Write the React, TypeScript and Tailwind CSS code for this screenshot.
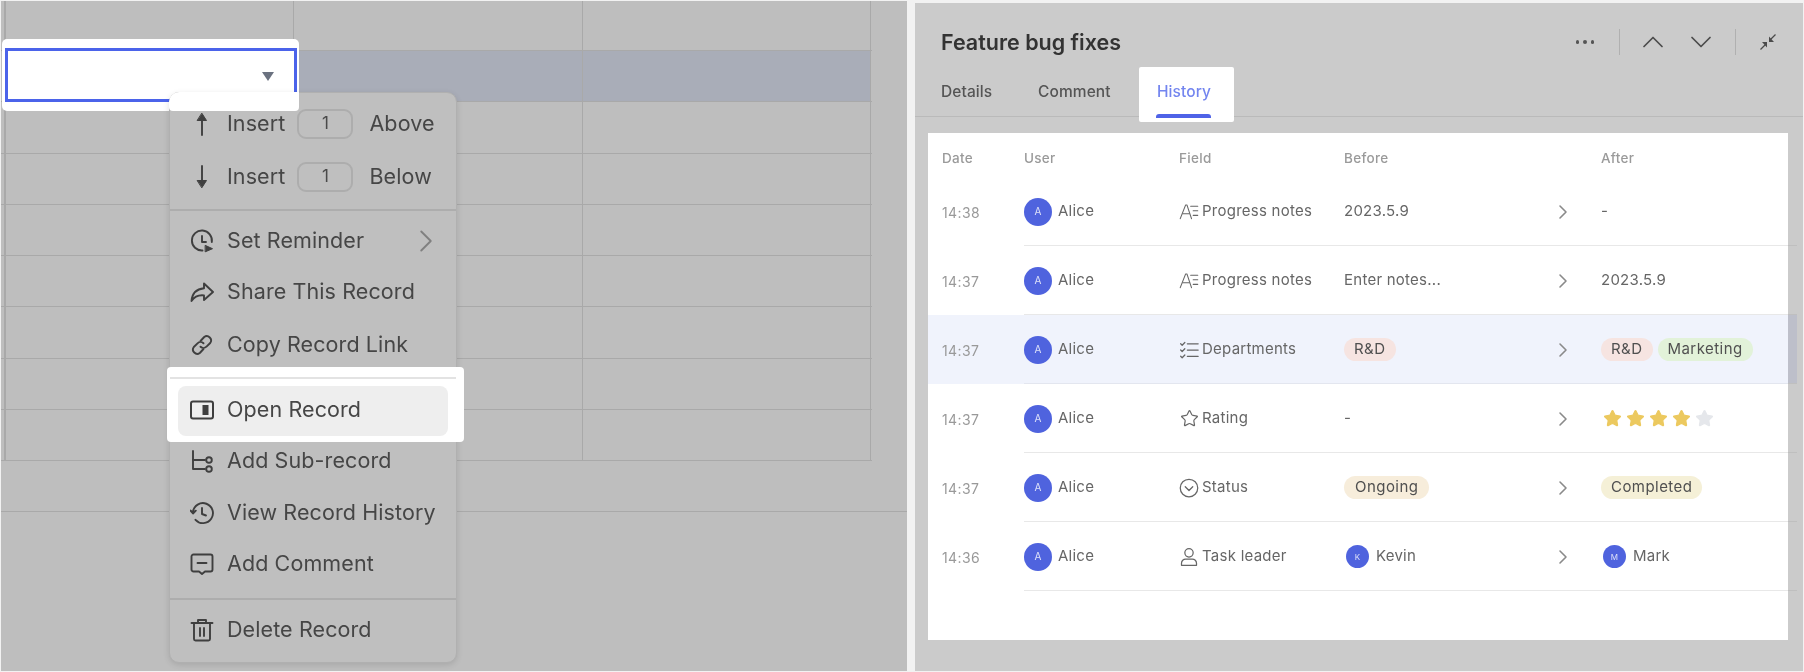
// App.tsx
import type { ReactNode } from "react";
import { ChevronDown, ChevronRight, ChevronUp, Star } from "lucide-react";

const ROWS = [0, 1, 2, 3, 4, 5, 6, 7, 8];

function IconBox({ children, size = 24 }: { children: ReactNode; size?: number }) {
  return (
    <svg width={size} height={size} viewBox="0 0 24 24" fill="none" stroke="currentColor" strokeWidth="1.9" strokeLinecap="round" strokeLinejoin="round" className="shrink-0">
      {children}
    </svg>
  );
}

const ArrowUpIcon = () => (
  <IconBox>
    <path d="M12 8v15" />
    <path d="M12 1.500l4.500 7h-9z" fill="currentColor" strokeWidth="1" />
  </IconBox>
);
const ArrowDownIcon = () => (
  <IconBox>
    <path d="M12 1v15" />
    <path d="M12 22.500l4.500-7h-9z" fill="currentColor" strokeWidth="1" />
  </IconBox>
);
const ReminderIcon = () => (
  <IconBox>
    <path d="M12.500 21.500A10 10 0 1 1 21.800 13" />
    <path d="M12 7v6h4" />
    <path d="M15.500 16.500l7 3.200-7 3z" fill="currentColor" strokeWidth="1" />
  </IconBox>
);
const ShareIcon = () => (
  <IconBox>
    <path d="M14 3.500l9 8.500-9 8v-4.600c-5.500-.6-9.500 1-12.500 5.600.5-7 4.500-12 12.500-12.800z" />
  </IconBox>
);
const LinkIcon = () => (
  <IconBox>
    <path d="M10.500 8l3.700-4a4.300 4.300 0 0 1 6 6l-3.700 3.700a4.300 4.300 0 0 1-6 0" />
    <path d="M13.500 16l-3.700 4a4.300 4.300 0 0 1-6-6l3.700-3.700a4.300 4.300 0 0 1 6 0" />
  </IconBox>
);
const OpenIcon = () => (
  <IconBox>
    <rect x="1" y="3.500" width="22" height="17" rx="2" strokeWidth="2" />
    <rect x="12.500" y="7" width="6" height="10" fill="currentColor" stroke="none" />
  </IconBox>
);
const SubRecordIcon = () => (
  <IconBox>
    <path d="M3 2v18h12" />
    <path d="M3 11h12" />
    <circle cx="19" cy="11" r="2.800" />
    <circle cx="19" cy="20" r="2.800" />
  </IconBox>
);
const HistoryIcon = () => (
  <IconBox>
    <path d="M3 11a10 10 0 1 1 2.500 7.800" />
    <path d="M.5 9.500l2.500 3 2.800-2.800" fill="currentColor" />
    <path d="M12 7v6l4 1.500" />
  </IconBox>
);
const CommentIcon = () => (
  <IconBox>
    <path d="M3.500 2.500h17a2 2 0 0 1 2 2v13a2 2 0 0 1-2 2H15l-3 2.500-3-2.500H3.500a2 2 0 0 1-2-2v-13a2 2 0 0 1 2-2z" />
    <path d="M7.500 11h9" />
  </IconBox>
);
const TrashIcon = () => (
  <IconBox>
    <path d="M1.500 5h21" />
    <path d="M8 5V2h8v3" />
    <path d="M4 5v16a1.500 1.500 0 0 0 1.500 1.500h13A1.500 1.500 0 0 0 20 21V5" />
    <path d="M10 10v8M14 10v8" />
  </IconBox>
);

const NotesIcon = () => (
  <IconBox size={20}>
    <g strokeWidth="1.300">
      <path d="M1.500 20L8 3.500h1.500L15 20" />
      <path d="M4.500 14h8" />
      <path d="M14 5h8.500M17 10.500h5.500M17 16h5.500" />
    </g>
  </IconBox>
);
const DepartmentsIcon = () => (
  <IconBox size={20}>
    <g strokeWidth="1.500">
      <path d="M10 4.500h13M10 12h13M10 19.500h13" />
      <path d="M2 4.500l1.800 1.800L7 3M2 12l1.800 1.800L7 10.500M2 19.500l1.800 1.800L7 18" />
    </g>
  </IconBox>
);
const StatusIcon = () => (
  <IconBox size={20}>
    <g strokeWidth="1.500">
      <circle cx="12" cy="12" r="10.500" />
      <path d="M7.500 10.500l4.500 4.500 4.500-4.500" />
    </g>
  </IconBox>
);
const UserIcon = () => (
  <IconBox size={20}>
    <g strokeWidth="1.500">
      <circle cx="12" cy="7" r="5" />
      <path d="M3 22v-2.500a5 5 0 0 1 5-5h8a5 5 0 0 1 5 5V22z" />
    </g>
  </IconBox>
);
const RatingIcon = () => (
  <span className="flex w-[20px] shrink-0 justify-center">
    <Star size={19} strokeWidth={1.500} />
  </span>
);

const CollapseIcon = () => (
  <svg width="16" height="16" viewBox="0 0 16 16" fill="none" stroke="currentColor" strokeWidth="1.300" className="mx-[4px]">
    <path d="M15.500.5L10 6M.5 15.500L6 10" />
    <path d="M9 8V2.500L14 8zM7 8v5.500L2 8z" fill="currentColor" stroke="none" />
  </svg>
);

function MenuRow({ icon, children, className = "" }: { icon: ReactNode; children: ReactNode; className?: string }) {
  return (
    <div className={`flex items-center text-[21.500px] tracking-[0.1px] text-[#464646] ${className}`}>
      <span className="flex w-[57px] shrink-0 justify-center pl-[7px] text-[#3f3f3f]">{icon}</span>
      {children}
    </div>
  );
}

function CountBox() {
  return (
    <span className="ml-[12px] mr-[16px] flex h-[30px] w-[56px] items-center justify-center rounded-[9px] border-2 border-[#adadad] text-[17px] text-[#4a4a4a]">1</span>
  );
}

function Sheet() {
  return (
    <div className="flex flex-col">
      {ROWS.map((r) => (
        <div key={r} className={`grid w-[871px] grid-cols-[5px_288px_289px_288px] border-b border-[#a9a9a9] ${r === 0 ? "h-[50px]" : "h-[51.250px]"}`}>
          <div className="border-r-2 border-[#a9a9a9]" />
          <div className="border-r border-[#a9a9a9]" />
          <div className={`border-r border-[#a9a9a9] ${r === 1 ? "bg-[#a9adb8]" : ""}`} />
          <div className={`border-r border-[#a9a9a9] ${r === 1 ? "bg-[#a9adb8]" : ""}`} />
        </div>
      ))}
      <div className="h-[51px] w-full border-b border-[#a9a9a9]" />
    </div>
  );
}

function ContextMenu() {
  return (
    <div className="absolute left-[168px] top-[91px] z-20 flex h-[571px] w-[288px] flex-col rounded-[10px] border border-[#b0b0b0] bg-[#bfbfbf] pt-[5px] shadow-[0_2px_6px_rgba(0,0,0,0.12)]">
      <MenuRow icon={<ArrowUpIcon />} className="h-[51px]">
        <span>Insert</span>
        <CountBox />
        <span>Above</span>
      </MenuRow>
      <MenuRow icon={<ArrowDownIcon />} className="mt-[2px] h-[51px]">
        <span>Insert</span>
        <CountBox />
        <span>Below</span>
      </MenuRow>
      <div className="mt-[7px] h-[2px] bg-[#adadad]" />
      <MenuRow icon={<ReminderIcon />} className="mt-[4px] h-[51px]">
        <span>Set Reminder</span>
        <ChevronRight size={38} strokeWidth={1.200} className="ml-auto mr-[11px] text-[#808080]" />
      </MenuRow>
      <MenuRow icon={<ShareIcon />} className="h-[51px]">Share This Record</MenuRow>
      <MenuRow icon={<LinkIcon />} className="h-[50px] pt-[5px]">Copy Record Link</MenuRow>
      <div className="relative z-10 -ml-[3px] -mr-[8px] h-[75px] rounded-[4px] bg-white pl-[3px] pr-[8px] pt-[10px]">
        <div className="h-[2px] bg-[#e3e3e3]" />
        <div className="mx-[8px] mt-[7px] h-[50px] rounded-[8px] bg-[#eeeeee]">
          <MenuRow icon={<OpenIcon />} className="-ml-[8px] h-[50px] pb-[3px]">Open Record</MenuRow>
        </div>
      </div>
      <MenuRow icon={<SubRecordIcon />} className="-mt-[7px] h-[51px]">Add Sub-record</MenuRow>
      <MenuRow icon={<HistoryIcon />} className="mt-[1px] h-[51px]">View Record History</MenuRow>
      <MenuRow icon={<CommentIcon />} className="h-[51px]">Add Comment</MenuRow>
      <div className="mt-[9px] h-[2px] bg-[#adadad]" />
      <MenuRow icon={<TrashIcon />} className="mt-[4px] h-[51px]">Delete Record</MenuRow>
    </div>
  );
}

function LeftPane() {
  return (
    <div className="relative my-[1px] ml-[1px] w-[906px] shrink-0 bg-[#bebebe]">
      <Sheet />
      {/* spotlight round the active cell */}
      <div className="absolute left-[1px] top-[38px] h-[72px] w-[297px] rounded-[5px] bg-white" />
      <div className="absolute left-[4px] top-[47px] z-10 h-[54px] w-[292px] border-[3px] border-[#4b63ea]">
        <div className="absolute right-[20px] top-[21px] h-0 w-0 border-x-[6.500px] border-t-[9px] border-x-transparent border-t-[#6b7280]" />
      </div>
      <ContextMenu />
      <div className="absolute left-[168px] top-[91px] z-30 h-[19px] w-[130px] rounded-b-[4px] rounded-tl-[10px] bg-white" />
    </div>
  );
}

type Change = { time: string; fieldIcon: ReactNode; field: string; before: ReactNode; after: ReactNode; active?: boolean };

function Pill({ color, children }: { color: string; children: ReactNode }) {
  return <span className={`inline-flex h-[23px] items-center rounded-full px-[10px] text-[15px] tracking-[0.45px] text-[#505050] ${color}`}>{children}</span>;
}

function Avatar({ letter, size }: { letter: string; size: "lg" | "sm" }) {
  return (
    <span className={`flex shrink-0 items-center justify-center rounded-full bg-[#4f63de] text-white/80 ${size === "lg" ? "h-[28px] w-[28px] text-[10px]" : "h-[23px] w-[23px] text-[8px]"}`}>{letter}</span>
  );
}

function Person({ letter, name }: { letter: string; name: string }) {
  return (
    <div className="flex items-center gap-[7px] pl-[2px] text-[#666666]">
      <Avatar letter={letter} size="sm" />
      {name}
    </div>
  );
}

function Stars() {
  return (
    <div className="flex gap-[4px] pl-[2px]">
      {[0, 1, 2, 3, 4].map((i) => (
        <Star key={i} size={19} strokeWidth={1.600} className={i < 4 ? "fill-[#ecc95f] text-[#ecc95f]" : "fill-[#e5e7eb] text-[#e5e7eb]"} />
      ))}
    </div>
  );
}

const CHANGES: Change[] = [
  { time: "14:38", fieldIcon: <NotesIcon />, field: "Progress notes", before: "2023.5.9", after: "-" },
  { time: "14:37", fieldIcon: <NotesIcon />, field: "Progress notes", before: "Enter notes...", after: "2023.5.9" },
  {
    time: "14:37",
    fieldIcon: <DepartmentsIcon />,
    field: "Departments",
    before: <Pill color="bg-[#f6e4e1]">R&amp;D</Pill>,
    after: (
      <div className="flex gap-[5px]">
        <Pill color="bg-[#f6e4e1]">R&amp;D</Pill>
        <Pill color="bg-[#e2f2d9]">Marketing</Pill>
      </div>
    ),
    active: true,
  },
  { time: "14:37", fieldIcon: <RatingIcon />, field: "Rating", before: "-", after: <Stars /> },
  { time: "14:37", fieldIcon: <StatusIcon />, field: "Status", before: <Pill color="bg-[#f7eddb] pl-[11px] pr-[11px]">Ongoing</Pill>, after: <Pill color="bg-[#f5f0d7]">Completed</Pill> },
  { time: "14:36", fieldIcon: <UserIcon />, field: "Task leader", before: <Person letter="K" name="Kevin" />, after: <Person letter="M" name="Mark" /> },
];

function HistoryRow({ change }: { change: Change }) {
  return (
    <div className={`relative -mr-[9px] flex h-[69px] text-[15px] tracking-[0.25px] text-[#666666] ${change.active ? "bg-[#f0f3fc]" : ""}`}>
      <div className="flex w-[96px] shrink-0 items-center pl-[14px] pt-[1px] text-[14px] tracking-[0.4px] text-[#999999]">{change.time}</div>
      <div className={`grid flex-1 grid-cols-[155px_165px_215px_42px_1fr] items-center border-b pt-[1px] ${change.active ? "border-[#e3e6ef]" : "border-[#e8e8e8]"}`}>
        <div className="flex items-center gap-[6px]">
          <Avatar letter="A" size="lg" />
          Alice
        </div>
        <div className="flex items-center gap-[3px]">
          {change.fieldIcon}
          {change.field}
        </div>
        <div>{change.before}</div>
        <ChevronRight size={24} strokeWidth={1.600} className="-ml-[8px] text-[#8a8a8a]" />
        <div>{change.after}</div>
      </div>
      {/* row pokes past the white card into the dimmed panel */}
      <div className={`absolute right-0 top-0 h-full w-[9px] border-b border-[#bfbfbf] ${change.active ? "bg-[#bdbfca]" : "bg-[#cbcbcb]"}`} />
    </div>
  );
}

function RightPane() {
  return (
    <div className="ml-[8px] mt-[3px] flex h-[668px] w-[888px] shrink-0 flex-col bg-[#cbcbcb]">
      <div className="flex h-[64px] shrink-0 items-center justify-between pl-[26px] pr-[23px] pt-[14px]">
        <div className="text-[21.500px] font-semibold text-[#333333]">Feature bug fixes</div>
        <div className="flex items-center text-[#4b4b4b]">
          <span className="mr-[22px] flex w-[24px] justify-center gap-[4px]">
            <i className="h-[3.500px] w-[3.500px] rounded-full bg-[#555555]" />
            <i className="h-[3.500px] w-[3.500px] rounded-full bg-[#555555]" />
            <i className="h-[3.500px] w-[3.500px] rounded-full bg-[#555555]" />
          </span>
          <span className="mr-[21px] h-[26px] w-[1px] bg-[#b0b0b0]" />
          <ChevronUp size={36} strokeWidth={1.150} className="-ml-[6px] mr-[12px]" />
          <ChevronDown size={36} strokeWidth={1.150} className="mr-[16px]" />
          <span className="mr-[20px] h-[26px] w-[1px] bg-[#b0b0b0]" />
          <CollapseIcon />
        </div>
      </div>
      <div className="flex h-[50px] shrink-0 items-center border-b border-[#bababa] pl-[26px] text-[15.500px] font-medium tracking-[0.1px] text-[#555555]">
        <span className="w-[97px]">Details</span>
        <span className="w-[101px]">Comment</span>
        <div className="relative flex h-[55px] w-[95px] flex-col items-center self-start rounded-[2px] bg-white pr-[5px] text-[#7385ef]">
          <span className="flex h-[50px] items-center">History</span>
          <span className="absolute bottom-[4px] left-[17px] h-[4px] w-[55px] rounded-t-[3px] bg-[#4f63e7]" />
        </div>
      </div>
      <div className="ml-[13px] mt-[16px] h-[507px] w-[860px] bg-white">
        <div className="grid h-[44px] grid-cols-[82px_155px_165px_257px_1fr] items-center pl-[14px] pt-[6px] text-[13.500px] font-medium tracking-[0.3px] text-[#9a9a9a]">
          <span>Date</span>
          <span>User</span>
          <span>Field</span>
          <span>Before</span>
          <span>After</span>
        </div>
        {CHANGES.map((c, i) => (
          <HistoryRow key={i} change={c} />
        ))}
      </div>
    </div>
  );
}

export default function App() {
  return (
    <div className="flex h-[672px] w-[1804px] overflow-hidden bg-[#f2f2f2] font-['Inter',sans-serif] blur-[0.6px]">
      <LeftPane />
      <RightPane />
    </div>
  );
}
